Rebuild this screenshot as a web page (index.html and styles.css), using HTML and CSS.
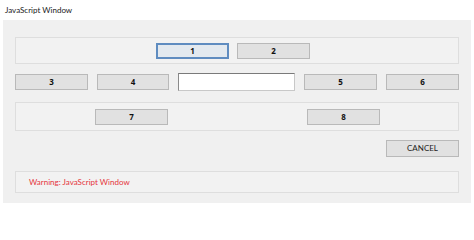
FILE: index.html
```html
<!DOCTYPE html>
<html>
<head>
<meta charset="utf-8">
<link rel="stylesheet" href="styles.css">
</head>
<body>
<div class="titlebar">JavaScript Window</div>
<div class="window">
  <div class="panel panel-top">
    <button class="btn focused">1</button>
    <button class="btn">2</button>
  </div>
  <div class="row-mid">
    <button class="btn">3</button>
    <button class="btn">4</button>
    <input class="field" type="text">
    <button class="btn">5</button>
    <button class="btn">6</button>
  </div>
  <div class="panel panel-two">
    <button class="btn">7</button>
    <button class="btn">8</button>
  </div>
  <div class="row-cancel">
    <button class="btn cancel">CANCEL</button>
  </div>
  <div class="panel panel-warn">Warning: JavaScript Window</div>
</div>
</body>
</html>
```
FILE: styles.css
```css
html, body {
  margin: 0;
  padding: 0;
  background: #ffffff;
  font-family: Lato, "Noto Sans", sans-serif;
}
.titlebar {
  height: 20px;
  line-height: 21px;
  padding-left: 5px;
  font-size: 8px;
  color: #1a1a1a;
}
.window {
  margin: 0 3px;
  height: 183px;
  box-sizing: border-box;
  background: #f0f0f0;
  padding: 17px 12px 10px;
  display: flex;
  flex-direction: column;
}
.panel {
  box-sizing: border-box;
  border: 1px solid #dedede;
  background: #f2f2f2;
}
.btn {
  box-sizing: border-box;
  width: 73px;
  height: 16px;
  margin: 0;
  padding: 0;
  border: 1px solid #b9b9b9;
  background: #e1e1e1;
  font-family: "Noto Sans", "Open Sans", sans-serif;
  font-size: 8px;
  font-weight: bold;
  color: #111;
  line-height: 14px;
}
.btn.focused {
  border: 2px solid #5f8cc0;
  background: #e3e9ef;
  line-height: 12px;
}
.panel-top {
  height: 28px;
  display: flex;
  align-items: center;
  padding-left: 140px;
  gap: 8px;
}
.row-mid {
  margin-top: 9px;
  display: grid;
  grid-template-columns: 73px 72px minmax(0, 1fr) 73px 73px;
  column-gap: 9px;
  align-items: center;
}
.row-mid .btn {
  width: 100%;
}
.field {
  box-sizing: border-box;
  width: 100%;
  min-width: 0;
  height: 18px;
  margin: 0;
  border: 1px solid #c8c8c8;
  border-top-color: #7a7a7a;
  border-left-color: #8a8a8a;
  background: #fff;
}
.panel-two {
  margin-top: 11px;
  height: 30px;
  display: flex;
  align-items: center;
  padding-left: 79px;
  gap: 139px;
}
.row-cancel {
  margin-top: 9px;
  display: flex;
  justify-content: flex-end;
}
.btn.cancel {
  height: 17px;
  font-family: Lato, "Noto Sans", sans-serif;
  font-weight: normal;
  font-size: 8px;
  color: #222;
  line-height: 15px;
}
.panel-warn {
  margin-top: 14px;
  height: 22px;
  line-height: 20px;
  padding-left: 13px;
  font-size: 8px;
  color: #e5353c;
}
```
